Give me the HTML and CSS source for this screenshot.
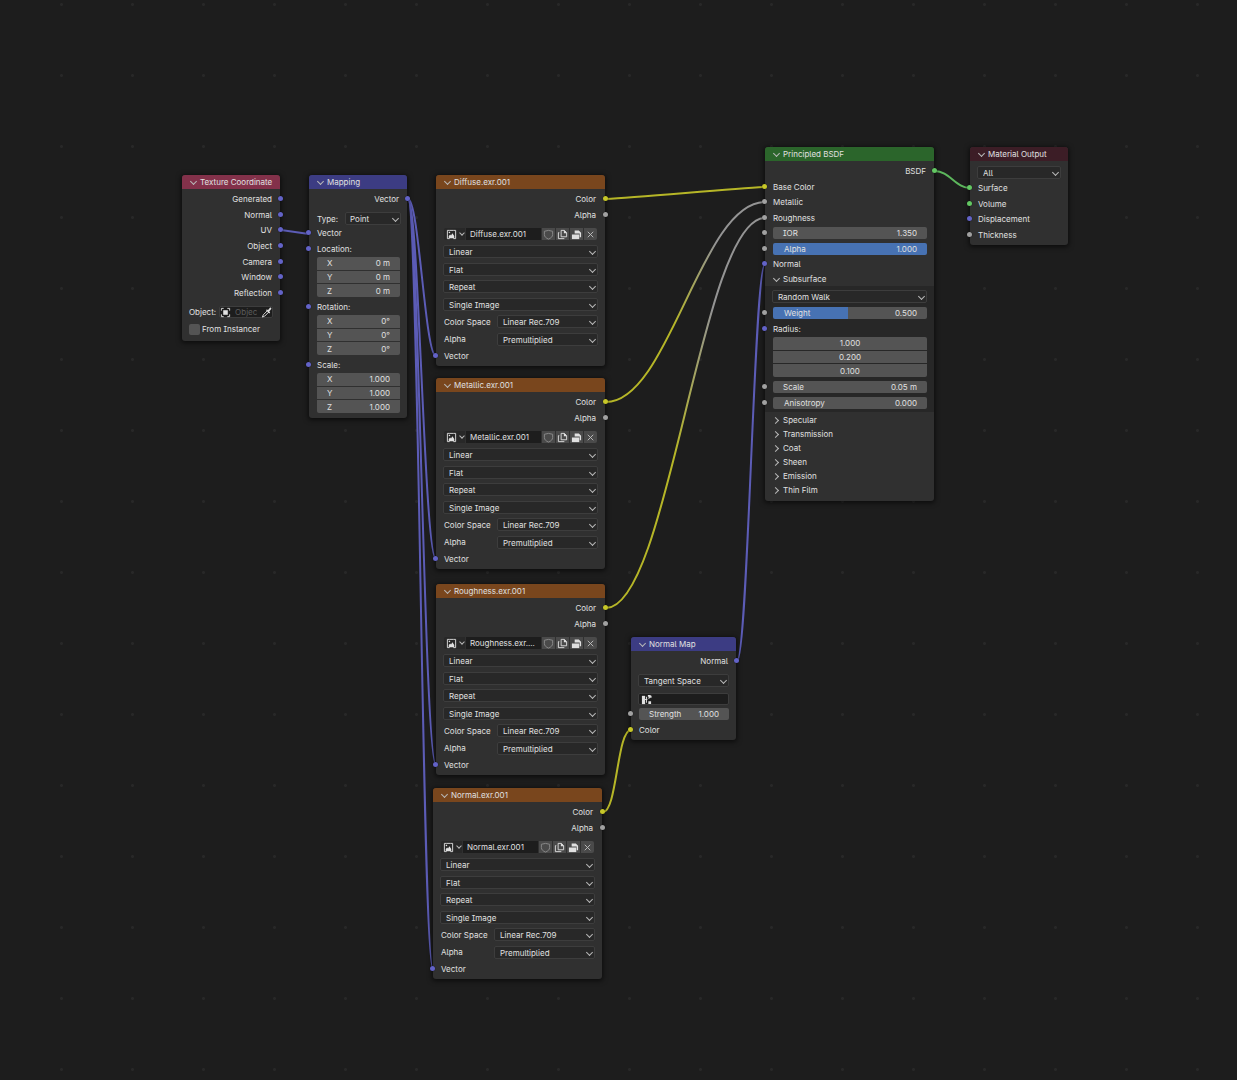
FILE: index.html
```
<!DOCTYPE html>
<html lang="en">
<head>
  <meta charset="UTF-8">
  <meta name="viewport" content="width=device-width, initial-scale=1.0">
  <title>Shader Editor</title>
  <link rel="stylesheet" href="styles.css">
</head>
<body>
  <svg class="icon-defs" aria-hidden="true">
    <symbol id="icon-image" viewBox="0 0 12 12">
      <path d="M4 1.500H1.500v9H4M8 1.500h2.500v9H8M4 1.500h4" fill="none" stroke="currentColor" />
      <path d="M3 10V7.500l1.500-1.500 1 1L7 4.500l2 3V10z" fill="currentColor" />
      <path d="M3 3h1.500v1.500H3z" fill="currentColor" />
    </symbol>
    <symbol id="icon-shield" viewBox="0 0 12 12">
      <path d="M6 1.500 10.500 2.500V6C10.500 8.500 8.500 10 6 11 3.500 10 1.500 8.500 1.500 6V2.500z" fill="none" stroke="currentColor" />
    </symbol>
    <symbol id="icon-copy" viewBox="0 0 12 12">
      <path d="M4.500 1.500h3.500l2.500 2.500v4.500h-6zM2.500 4H1.500v6.500h6.500" fill="none" stroke="currentColor" />
      <path d="M7.500 1l3.500 3.500H7.500z" fill="currentColor" />
    </symbol>
    <symbol id="icon-pack" viewBox="0 0 12 12">
      <path d="M4 5V1.500h4.500L11 4v5H9.500V5z" fill="currentColor" />
      <path d="M1 6h8v5H1z" fill="currentColor" />
    </symbol>
    <symbol id="icon-close" viewBox="0 0 12 12">
      <path d="M3 3l6 6M9 3l-6 6" fill="none" stroke="currentColor" />
    </symbol>
    <symbol id="icon-object" viewBox="0 0 12 12">
      <path d="M1.500 4V1.500H4M8 1.500h2.500V4M10.500 8v2.500H8M4 10.500H1.500V8" fill="none" stroke="currentColor" />
      <path d="M3.500 3.500h5v5h-5z" fill="currentColor" />
    </symbol>
    <symbol id="icon-eyedropper" viewBox="0 0 12 12">
      <path d="M7 4 2.500 8.500 1.500 11l2.500-1L8.500 5.500" fill="none" stroke="currentColor" />
      <path d="M5.500 3.500l1-1 1 1 2-2.500c1-1 2.500.500 1.500 1.500L9 5l1 1-1 1z" fill="currentColor" />
    </symbol>
    <symbol id="icon-uv" viewBox="0 0 12 12">
      <path d="M1 2h3.500v9H1z" fill="currentColor" />
      <path d="M4 6h3M6 3v6.500" fill="none" stroke="currentColor" />
      <path d="M7.500 1h3v1h1v2h-2v1h-2V4h1V3h-1zM8 8h3v3H8z" fill="currentColor" />
    </symbol>
  </svg>

  <main class="editor">
    <svg class="links" aria-hidden="true">
      <defs>
        <linearGradient id="metallic-link" gradientUnits="userSpaceOnUse" x1="605" y1="402" x2="765" y2="202">
          <stop offset="0.4" stop-color="#c7c729" />
          <stop offset="0.75" stop-color="#a1a1a1" />
        </linearGradient>
        <linearGradient id="roughness-link" gradientUnits="userSpaceOnUse" x1="605" y1="608" x2="765" y2="218">
          <stop offset="0.4" stop-color="#c7c729" />
          <stop offset="0.75" stop-color="#a1a1a1" />
        </linearGradient>
      </defs>
      <g class="link-vector">
        <path d="M281 230 L309 234" />
        <path d="M408 199 C419 199 425 356 436 356" />
        <path d="M408 199 C419 199 424 559 436 559" />
        <path d="M408 199 C419 199 424 765 436 765" />
        <path d="M408 199 C419 199 422 969 433 969" />
        <path d="M737 661 C748 661 754 264 765 264" />
      </g>
      <g class="link-color">
        <path d="M606 199 C640 197 731 189 765 187" />
        <path d="M603 812 C617 812 617 730 631 730" />
      </g>
      <path stroke="url(#metallic-link)" d="M606 402 C669 402 701 202 765 202" />
      <path stroke="url(#roughness-link)" d="M606 608 C669 608 701 218 765 218" />
      <path class="link-shader" d="M935 171 C949 171 956 188 970 188" />
    </svg>

    <section class="node node-small" style="left: 182px; top: 175px">
      <h2 class="node-title title-input"><i class="chevron"></i>Texture Coordinate</h2>
      <ul class="sockets coordinate-outputs">
        <li class="output vector">Generated</li>
        <li class="output vector">Normal</li>
        <li class="output vector">UV</li>
        <li class="output vector">Object</li>
        <li class="output vector">Camera</li>
        <li class="output vector">Window</li>
        <li class="output vector">Reflection</li>
      </ul>
      <div class="object-row">
        <label for="object">Object:</label>
        <div class="picker">
          <svg class="icon"><use href="#icon-object" /></svg>
          <input type="text" id="object" placeholder="Objec">
          <svg class="icon"><use href="#icon-eyedropper" /></svg>
        </div>
      </div>
      <label class="check-row"><input type="checkbox">From Instancer</label>
    </section>

    <section class="node node-small node-mapping" style="left: 309px; top: 175px">
      <h2 class="node-title title-vector"><i class="chevron"></i>Mapping</h2>
      <div class="row output vector">Vector</div>
      <div class="type-row">
        <label for="mapping-type">Type:</label>
        <div class="dropdown"><select id="mapping-type"><option>Point</option></select></div>
      </div>
      <div class="row input vector">Vector</div>
      <div class="row input vector">Location:</div>
      <div class="fields">
        <label class="field">X<input type="text" value="0 m"></label>
        <label class="field">Y<input type="text" value="0 m"></label>
        <label class="field">Z<input type="text" value="0 m"></label>
      </div>
      <div class="row input vector">Rotation:</div>
      <div class="fields">
        <label class="field">X<input type="text" value="0°"></label>
        <label class="field">Y<input type="text" value="0°"></label>
        <label class="field">Z<input type="text" value="0°"></label>
      </div>
      <div class="row input vector">Scale:</div>
      <div class="fields">
        <label class="field">X<input type="text" value="1.000"></label>
        <label class="field">Y<input type="text" value="1.000"></label>
        <label class="field">Z<input type="text" value="1.000"></label>
      </div>
    </section>

    <div id="textures"></div>

    <section class="node node-normal" style="left: 631px; top: 637px">
      <h2 class="node-title title-vector"><i class="chevron"></i>Normal Map</h2>
      <div class="row output vector">Normal</div>
      <div class="dropdown space"><select aria-label="Space"><option>Tangent Space</option></select></div>
      <div class="picker uv-map">
        <svg class="icon"><use href="#icon-uv" /></svg>
        <input type="text" aria-label="UV Map">
      </div>
      <div class="row input value"><label class="field single">Strength<input type="text" value="1.000"></label></div>
      <div class="row input color">Color</div>
    </section>

    <section class="node node-bsdf" style="left: 765px; top: 147px">
      <h2 class="node-title title-shader"><i class="chevron"></i>Principled BSDF</h2>
      <div class="row output shader">BSDF</div>
      <ul class="sockets bsdf-inputs">
        <li class="input color">Base Color</li>
        <li class="input value">Metallic</li>
        <li class="input value">Roughness</li>
        <li class="input value"><label class="field single">IOR<input type="text" value="1.350"></label></li>
        <li class="input value">
          <div class="slider">
            <input type="range" id="alpha" min="0" max="1" step="0.001" value="1" style="--fill: 100%">
            <label for="alpha">Alpha</label><output for="alpha">1.000</output>
          </div>
        </li>
        <li class="input vector">Normal</li>
      </ul>
      <button class="panel-toggle"><i class="chevron"></i>Subsurface</button>
      <div class="panel">
        <div class="dropdown"><select aria-label="Subsurface Method"><option>Random Walk</option></select></div>
        <div class="row input value">
          <div class="slider">
            <input type="range" id="weight" min="0" max="1" step="0.001" value="0.5" style="--fill: 49%">
            <label for="weight">Weight</label><output for="weight">0.500</output>
          </div>
        </div>
        <div class="row input vector">Radius:</div>
        <div class="fields centered">
          <div class="field"><input type="text" value="1.000" aria-label="Radius R"></div>
          <div class="field"><input type="text" value="0.200" aria-label="Radius G"></div>
          <div class="field"><input type="text" value="0.100" aria-label="Radius B"></div>
        </div>
        <div class="row input value"><label class="field single">Scale<input type="text" value="0.05 m"></label></div>
        <div class="row input value">
          <div class="slider">
            <input type="range" id="anisotropy" min="0" max="1" step="0.001" value="0" style="--fill: 0%">
            <label for="anisotropy">Anisotropy</label><output for="anisotropy">0.000</output>
          </div>
        </div>
      </div>
      <button class="panel-toggle"><i class="chevron closed"></i>Specular</button>
      <button class="panel-toggle"><i class="chevron closed"></i>Transmission</button>
      <button class="panel-toggle"><i class="chevron closed"></i>Coat</button>
      <button class="panel-toggle"><i class="chevron closed"></i>Sheen</button>
      <button class="panel-toggle"><i class="chevron closed"></i>Emission</button>
      <button class="panel-toggle"><i class="chevron closed"></i>Thin Film</button>
    </section>

    <section class="node node-small node-output" style="left: 970px; top: 147px">
      <h2 class="node-title title-output"><i class="chevron"></i>Material Output</h2>
      <div class="dropdown"><select aria-label="Target"><option>All</option></select></div>
      <ul class="sockets material-inputs">
        <li class="input shader">Surface</li>
        <li class="input shader">Volume</li>
        <li class="input vector">Displacement</li>
        <li class="input value">Thickness</li>
      </ul>
    </section>
  </main>

  <script>
    const textures = [
      { title: 'Diffuse.exr.001', file: 'Diffuse.exr.001', x: 436, y: 175 },
      { title: 'Metallic.exr.001', file: 'Metallic.exr.001', x: 436, y: 378 },
      { title: 'Roughness.exr.001', file: 'Roughness.exr....', x: 436, y: 584 },
      { title: 'Normal.exr.001', file: 'Normal.exr.001', x: 433, y: 788 },
    ];

    function dropdown(id, label, value) {
      return `<div class="dropdown"><select id="${id}" aria-label="${label}"><option>${value}</option></select></div>`;
    }

    function iconButton(icon, label) {
      return `<button class="icon-button ${icon}" aria-label="${label}"><svg class="icon"><use href="#icon-${icon}" /></svg></button>`;
    }

    document.getElementById('textures').innerHTML = textures.map((t, i) => `
      <section class="node node-texture" style="left: ${t.x}px; top: ${t.y}px">
        <h2 class="node-title title-texture"><i class="chevron"></i>${t.title}</h2>
        <div class="row output color">Color</div>
        <div class="row output value">Alpha</div>
        <div class="image-row">
          <button class="image-browse" aria-label="Browse image"><svg class="icon"><use href="#icon-image" /></svg><i class="chevron"></i></button>
          <input type="text" value="${t.file}" aria-label="Image name">
          ${iconButton('shield', 'Fake user')}
          ${iconButton('copy', 'New image')}
          ${iconButton('pack', 'Open image')}
          ${iconButton('close', 'Unlink')}
        </div>
        <div class="options">
          ${dropdown(`interpolation-${i}`, 'Interpolation', 'Linear')}
          ${dropdown(`projection-${i}`, 'Projection', 'Flat')}
          ${dropdown(`extension-${i}`, 'Extension', 'Repeat')}
          ${dropdown(`source-${i}`, 'Source', 'Single Image')}
          <div class="option-row"><label for="space-${i}">Color Space</label>${dropdown(`space-${i}`, 'Color Space', 'Linear Rec.709')}</div>
          <div class="option-row"><label for="alpha-${i}">Alpha</label>${dropdown(`alpha-${i}`, 'Alpha', 'Premultiplied')}</div>
        </div>
        <div class="row input vector">Vector</div>
      </section>`).join('');

    document.querySelectorAll('.slider input').forEach(range => {
      range.addEventListener('input', () => {
        range.style.setProperty('--fill', `${range.value * 100}%`);
        range.parentElement.querySelector('output').textContent = Number(range.value).toFixed(3);
      });
    });
  </script>
</body>
</html>
```
FILE: styles.css
```
* {
  margin: 0;
  padding: 0;
  box-sizing: border-box;
}

body {
  background-color: #1d1d1d;
  color: #e0e0e0;
  font-family: Inter, 'Liberation Sans', sans-serif;
  font-size: 8px;
  line-height: 12px;
}

input,
select,
button {
  appearance: none;
  border: none;
  border-radius: 0;
  background: none;
  color: inherit;
  font: inherit;
  font-feature-settings: inherit;
  min-width: 0;
}

.icon-defs {
  position: absolute;
  width: 0;
  height: 0;
}

.editor {
  position: relative;
  min-height: 100vh;
  background-image: radial-gradient(circle, #282828 1px, transparent 2px);
  background-size: 71px 71px;
  background-position: 26px 40px;
  font-feature-settings: 'cv05', 'cv08';
}

.links {
  position: absolute;
  inset: 0;
  width: 100%;
  height: 100%;
  fill: none;
  stroke-width: 2;
  opacity: 0.9;
}

.link-vector {
  stroke: #6363c7;
}

.link-color {
  stroke: #c7c729;
}

.link-shader {
  stroke: #63c763;
}

/* Nodes */
.node {
  position: absolute;
  width: 169px;
  padding-bottom: 2px;
  border-radius: 3px;
  background-color: #303030;
  box-shadow: 0 1px 5px 1px rgba(0, 0, 0, 0.6);
}

.node-small {
  width: 98px;
}

.node-normal {
  width: 105px;
}

.node-mapping {
  padding-bottom: 3px;
}

.node-bsdf {
  padding-bottom: 4px;
}

.node-title,
.panel-toggle {
  display: flex;
  align-items: center;
  gap: 4px;
  height: 14px;
  padding-left: 9px;
  white-space: nowrap;
}

.node-title {
  margin-bottom: 2px;
  border-radius: 3px 3px 0 0;
  font-size: 8px;
  font-weight: 400;
}

.title-input {
  background-color: #83314a;
}

.title-vector {
  background-color: #3c3c83;
}

.title-texture {
  background-color: #79461d;
}

.title-shader {
  background-color: #2b652b;
}

.title-output {
  background-color: #3c1d26;
}

.chevron {
  flex: none;
  width: 5px;
  height: 5px;
  border: solid #b8b8b8;
  border-width: 0 1px 1px 0;
  transform: translateY(-1px) rotate(45deg);
}

.chevron.closed {
  transform: translateX(-1px) rotate(-45deg);
}

/* Sockets */
.row,
.sockets li {
  position: relative;
  display: flex;
  align-items: center;
  padding: 0 7px 0 8px;
}

.row {
  height: 16px;
}

.row.output,
.sockets .output {
  justify-content: flex-end;
  padding-right: 8px;
}

.node-texture .output {
  padding-right: 9px;
}

.sockets {
  display: grid;
  grid-auto-rows: 1fr;
  list-style: none;
}

.coordinate-outputs {
  height: 110px;
}

.bsdf-inputs {
  height: 93px;
}

.material-inputs {
  height: 63px;
  margin-top: 1px;
}

.output::after,
.input::after {
  content: '';
  position: absolute;
  top: calc(50% - 3px);
  width: 5px;
  height: 5px;
  border-radius: 50%;
  background-color: #a1a1a1;
  box-shadow: 0 0 1px #000000;
}

.output::after {
  right: -3px;
}

.input::after {
  left: -3px;
}

.vector::after {
  background-color: #6363c7;
}

.color::after {
  background-color: #c7c729;
}

.shader::after {
  background-color: #63c763;
}

/* Dropdowns */
.dropdown {
  position: relative;
  height: 13px;
  margin: 0 7px;
}

.dropdown select {
  display: block;
  width: 100%;
  height: 100%;
  padding: 0 5px;
  border: 1px solid #3d3d3d;
  border-radius: 2px;
  background-color: #282828;
}

.dropdown::after {
  content: '';
  position: absolute;
  top: 4px;
  right: 3px;
  width: 4px;
  height: 4px;
  border: solid #b8b8b8;
  border-width: 0 1px 1px 0;
  transform: rotate(45deg);
  pointer-events: none;
}

.icon {
  flex: none;
  width: 11px;
  height: 11px;
}

/* Texture Coordinate */
.object-row {
  display: flex;
  align-items: center;
  margin: 5px 7px 0;
}

.picker {
  display: flex;
  align-items: center;
  flex: 1;
  height: 12px;
  border: 1px solid #3d3d3d;
  border-radius: 2px;
  background-color: #1d1d1d;
}

.object-row .picker {
  gap: 4px;
  margin-left: 3px;
}

.picker input {
  flex: 1;
  width: 0;
}

.picker input::placeholder {
  color: #5c5c5c;
}

.check-row {
  display: flex;
  align-items: center;
  gap: 2px;
  margin: 5px 7px 4px;
}

.check-row input {
  width: 11px;
  height: 11px;
  border-radius: 2px;
  background-color: #545454;
}

/* Mapping */
.type-row {
  display: flex;
  align-items: center;
  margin: 5px 6px 0 8px;
}

.type-row .dropdown {
  flex: 1;
  margin: 0 0 0 7px;
}

.type-row select {
  padding: 0 4px;
}

.fields {
  display: grid;
  grid-auto-rows: 1fr;
  gap: 1px;
  height: 40px;
  margin: 0 7px 2px 8px;
  border-radius: 2px;
  overflow: hidden;
}

.field {
  display: flex;
  align-items: center;
  padding: 0 10px;
  background-color: #545454;
}

.field input {
  flex: 1;
  width: 0;
  text-align: right;
}

.field.single {
  flex: 1;
  height: 12px;
  border-radius: 2px;
}

.centered .field input {
  text-align: center;
}

/* Image Texture */
.image-row {
  display: flex;
  height: 12px;
  margin: 5px 8px 3px;
}

.image-browse {
  display: flex;
  align-items: center;
  gap: 3px;
  width: 21px;
  padding-left: 2px;
  border-radius: 2px 0 0 2px;
  background-color: #282828;
}

.image-browse .chevron {
  width: 4px;
  height: 4px;
}

.image-row input {
  flex: 1;
  width: 0;
  margin-left: 1px;
  padding-left: 4px;
  background-color: #1d1d1d;
}

.icon-button {
  display: flex;
  align-items: center;
  justify-content: center;
  width: 13px;
  margin-left: 1px;
  background-color: #4a4a4a;
}

.icon-button.shield {
  color: #8c8c8c;
}

.icon-button.close {
  border-radius: 0 2px 2px 0;
  color: #c0c0c0;
}

.options {
  display: grid;
  grid-auto-rows: 1fr;
  align-items: center;
  height: 105px;
}

.option-row {
  display: flex;
  align-items: center;
  padding-left: 8px;
}

.option-row label {
  width: 53px;
}

.option-row .dropdown {
  flex: 1;
  margin-left: 0;
}

/* Normal Map */
.space {
  margin-top: 5px;
}

.uv-map {
  margin: 6px 7px 1px;
  padding-left: 2px;
}

/* Principled BSDF */
.slider {
  position: relative;
  flex: 1;
  height: 12px;
}

.slider input {
  display: block;
  width: 100%;
  height: 100%;
  border-radius: 2px;
  background: linear-gradient(#4772b3, #4772b3) no-repeat left / var(--fill) 100% #545454;
}

.slider input::-webkit-slider-thumb {
  appearance: none;
  width: 1px;
  height: 12px;
}

.slider label,
.slider output {
  position: absolute;
  top: 0;
  pointer-events: none;
}

.slider label {
  left: 11px;
}

.slider output {
  right: 10px;
}

.panel-toggle {
  width: 100%;
}

.panel {
  padding: 4px 0 1px;
  margin-bottom: 1px;
  background-color: #272727;
}

.panel .dropdown {
  margin-bottom: 2px;
}

/* Material Output */
.node-output .dropdown {
  margin-top: 5px;
}
```
